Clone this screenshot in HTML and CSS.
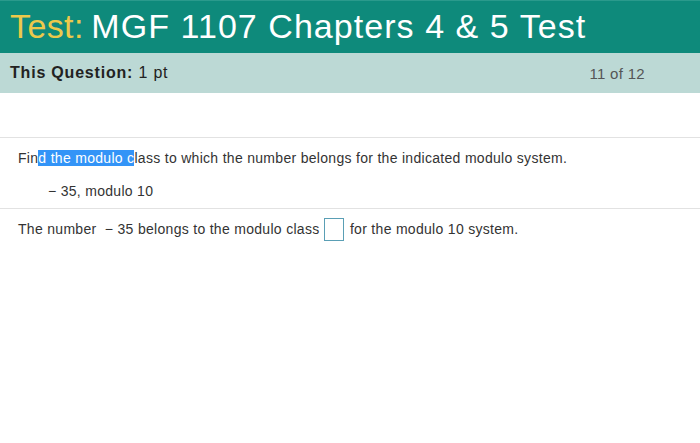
FILE: index.html
```html
<!DOCTYPE html>
<html lang="en">
<head>
    <meta charset="UTF-8">
    <title>Test: MGF 1107 Chapters 4 &amp; 5 Test</title>
    <link rel="stylesheet" href="styles.css">
</head>
<body>
    <div class="test-header">
        <span class="test-label">Test:</span> MGF 1107 Chapters 4 &amp; 5 Test
    </div>
    <div class="question-bar">
        <div class="points"><b>This Question:</b> 1 pt</div>
        <div class="counter">11 of 12</div>
    </div>

    <div class="question">
        <div class="prompt">
            <p>Fin<span class="selected">d the modulo c</span>lass to which the number belongs for the indicated modulo system.</p>
            <p class="given">&minus; 35, modulo 10</p>
        </div>
        <div class="answer">
            <p>The number &nbsp;&minus; 35 belongs to the modulo class <span class="answer-box"></span> for the modulo 10 system.</p>
        </div>
    </div>
</body>
</html>
```

FILE: styles.css
```css
body {
    font-family: "Liberation Sans", Arial, sans-serif;
    background-color: #ffffff;
    color: #333333;
    margin: 0;
    padding: 0;
}
.test-header {
    height: 53px;
    line-height: 50px;
    padding-left: 10px;
    background: #0e8a7b;
    border-top: 1px solid #2a9a8c;
    box-sizing: border-box;
    color: #ffffff;
    font-size: 34px;
    letter-spacing: 1.05px;
    white-space: nowrap;
}
.test-label {
    color: #ecc94b;
    letter-spacing: 0.4px;
    margin-right: -3px;
}
.question-bar {
    display: flex;
    justify-content: space-between;
    align-items: center;
    height: 40px;
    padding: 0 55px 0 10px;
    background: #bcd9d5;
    font-size: 16px;
    letter-spacing: 0.8px;
    color: #222222;
}
.counter {
    font-size: 15px;
    letter-spacing: 0.3px;
    color: #555555;
}
.question {
    margin-top: 44px;
    border-top: 1px solid #e2e2e2;
    font-size: 14px;
    letter-spacing: 0.3px;
}
.question p {
    margin: 0;
}
.prompt {
    padding: 12px 18px 0;
    border-bottom: 1px solid #e2e2e2;
}
.prompt .given {
    padding: 17px 0 9px 30px;
}
.selected {
    background: #3394f7;
    color: #ffffff;
}
.answer {
    padding: 9px 18px;
}
.answer-box {
    display: inline-block;
    width: 18px;
    height: 21px;
    border: 1px solid #5a9fb5;
    vertical-align: -7px;
    margin: 0 2px 0 0;
}
```
